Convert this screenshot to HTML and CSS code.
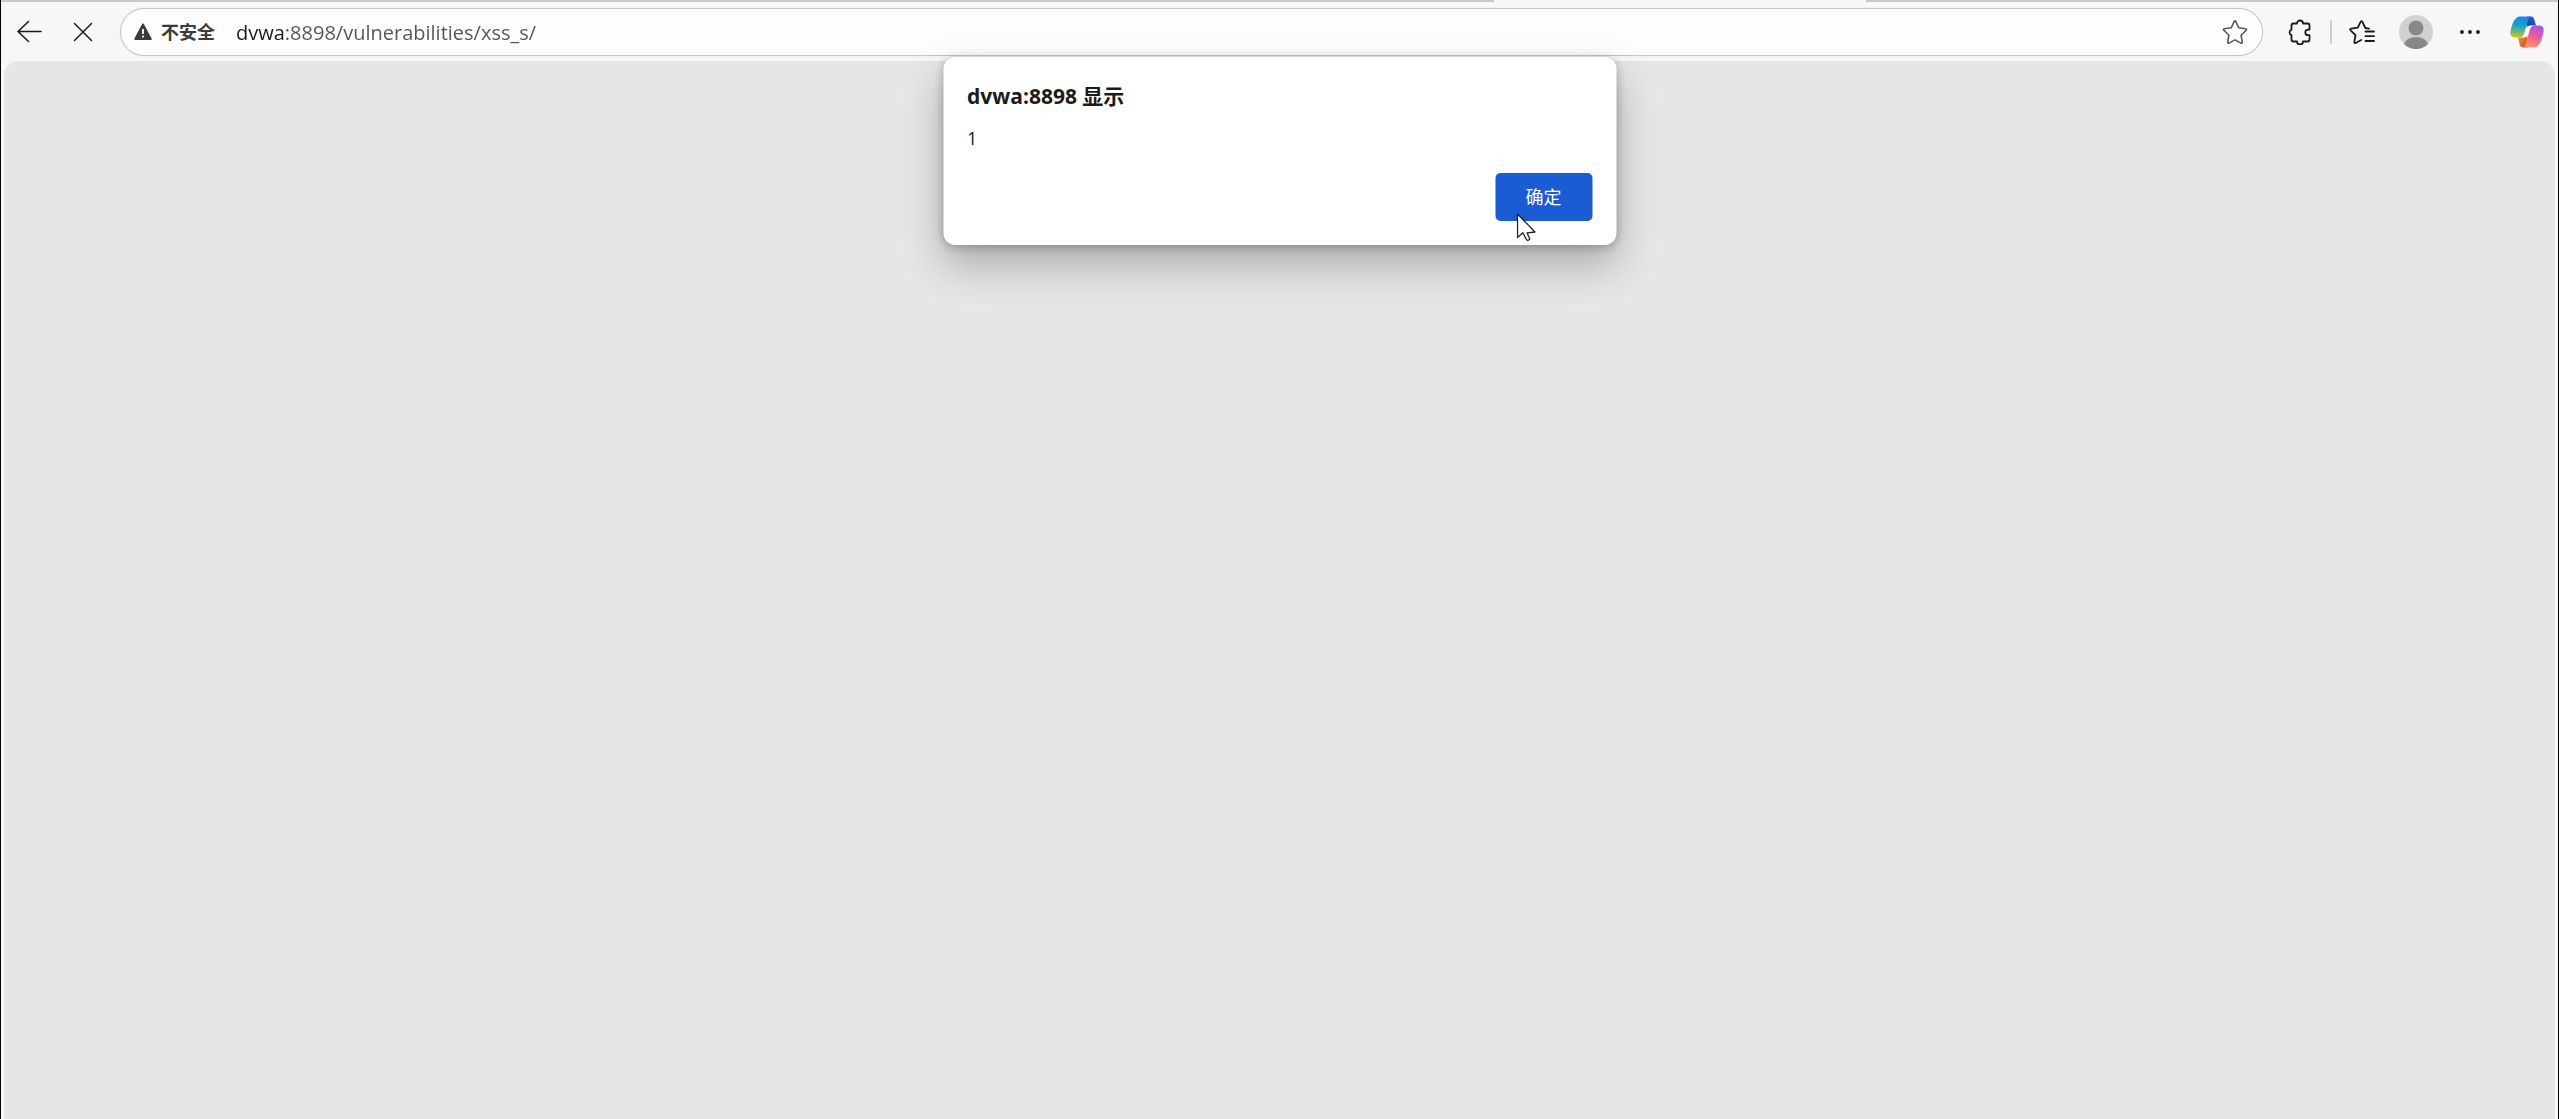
FILE: index.html
```html
<!DOCTYPE html>
<html lang="zh-CN">
<head>
	<meta charset="UTF-8">
	<title>dvwa:8898/vulnerabilities/xss_s/</title>
	<link rel="stylesheet" href="styles.css">
</head>
<body>
<!-- 标签栏底边 -->
	<div class="tabs">
		<div class="line tabs-left"></div>
		<div class="tab-gap"></div>
		<div class="line tabs-right"></div>
	</div>
<!-- 工具栏 -->
	<header class="toolbar">
		<button class="tool" aria-label="返回">
			<svg width="26" height="26" viewBox="0 0 26 26" fill="none" stroke="#1b1b1b" stroke-width="1.6" stroke-linecap="round" stroke-linejoin="round"><path d="M25 12.5H2M12.500 2.500 2 12.500l10.500 10"/></svg>
		</button>
		<button class="tool" aria-label="停止">
			<svg width="20" height="20" viewBox="0 0 20 20" fill="none" stroke="#1b1b1b" stroke-width="1.500" stroke-linecap="round"><path d="M1.500 1.500l17 17M18.500 1.500l-17 17"/></svg>
		</button>
		<div class="address">
			<button class="unsafe">
				<svg width="18" height="18" viewBox="0 0 18 18"><path d="M9 1.500 16.700 16H1.300z" fill="#3b3b3b" stroke="#3b3b3b" stroke-width="2" stroke-linejoin="round"/><path d="M9 6v5" stroke="#fff" stroke-width="1.800"/><circle cx="9" cy="13.500" r="1.100" fill="#fff"/></svg>
				<span>不安全</span>
			</button>
			<input class="url" type="text" aria-label="地址" value="dvwa:8898/vulnerabilities/xss_s/">
			<button class="tool" aria-label="收藏此页">
				<svg width="26" height="26" viewBox="0 0 26 26" fill="none" stroke="#555" stroke-width="1.600" stroke-linejoin="round"><path d="M12.200 2.500q.8-1.300 1.600 0l2.900 6.200 6.900 1q1.500.4.5 1.600l-5 4.900 1.200 6.900q0 1.500-1.400 1L13 20.900l-5.900 3.200q-1.400.5-1.400-1l1.200-6.900-5-4.900q-1-1.200.5-1.600l6.900-1z"/></svg>
			</button>
		</div>
		<button class="tool" aria-label="扩展">
			<svg width="26" height="26" viewBox="0 0 26 26" fill="none" stroke="#1b1b1b" stroke-width="1.800" stroke-linejoin="round"><path d="M6.500 4.500H10a3 3 0 0 1 6 0h4.500q2 0 2 2v4.200h-1.500a2.700 2.700 0 0 0 0 5.400h1.500v4.400q0 2-2 2H16a3 3 0 0 1-6 0H6.500q-2 0-2-2v-4.300a3 3 0 0 1 0-5.600V6.500q0-2 2-2z"/></svg>
		</button>
		<span class="divider"></span>
		<button class="tool" aria-label="收藏夹">
			<svg width="26" height="26" viewBox="0 0 26 26" fill="none" stroke="#1b1b1b" stroke-width="1.800" stroke-linecap="round" stroke-linejoin="round"><path d="M20 9.600l-3.700-.6-3-6.300q-.8-1.300-1.600 0L8.800 8.700l-6.700 1q-1.500.4-.5 1.600l4.900 4.900-1.200 6.900q0 1.400 1.400.9l5.500-3M16.500 12.500H25M16.500 17.200H25M16.500 22H25"/></svg>
		</button>
		<button class="tool" aria-label="个人资料">
			<svg width="34" height="34" viewBox="0 0 34 34"><circle cx="17" cy="17" r="17" fill="#d1d1d1"/><circle cx="17" cy="13" r="7.500" fill="#8a8886"/><path d="M5 29q3-7 12-7t12 7q-5 5-12 5T5 29z" fill="#8a8886"/></svg>
		</button>
		<button class="tool" aria-label="更多">
			<svg width="22" height="6" viewBox="0 0 22 6" fill="#1b1b1b"><circle cx="3" cy="3" r="1.900"/><circle cx="11" cy="3" r="1.900"/><circle cx="19" cy="3" r="1.900"/></svg>
		</button>
		<button class="tool copilot" aria-label="Copilot">
			<svg width="34" height="32" viewBox="0 0 34 32">
				<defs>
					<linearGradient id="cold" x1=".4" y1="0" x2=".3" y2="1"><stop offset="0" stop-color="#1888e6"/><stop offset=".4" stop-color="#1c9ed0"/><stop offset=".7" stop-color="#5fbb77"/><stop offset="1" stop-color="#d6c61c"/></linearGradient>
					<linearGradient id="warm" x1=".7" y1="0" x2=".4" y2="1"><stop offset="0" stop-color="#a655ea"/><stop offset=".5" stop-color="#ee5c96"/><stop offset="1" stop-color="#ff9468"/></linearGradient>
					<linearGradient id="navy" x1="0" y1="1" x2="1" y2="0"><stop offset="0" stop-color="#123c9c"/><stop offset="1" stop-color="#2a68dd"/></linearGradient>
					<linearGradient id="fire" x1="0" y1="0" x2="1" y2="1"><stop offset="0" stop-color="#f0a030"/><stop offset="1" stop-color="#d83f35"/></linearGradient>
				</defs>
				<path d="M17 .5h4q2.500 0 3.300 3l1.700 6h-5q-3 0-4.500 3z" fill="url(#navy)"/>
				<path d="M17 31.500h-4q-2.500 0-3.300-3L8 21.500h5q3 0 4.500-3z" fill="url(#fire)"/>
				<path d="M9.500.5H21q-2 .5-3 4l-3.500 12.500q-1.400 4.500-5 4.500H5Q.3 21.500.3 16.500q0-2 2.200-8.500T9.500.5z" fill="url(#cold)"/>
				<path d="M24.500 31.500H13q2-.5 3-4L19.500 14q1.400-4.500 5-4.500H29q4.700 0 4.700 5 0 2-2.200 9t-7 8z" fill="url(#warm)"/>
				<path d="M19.800 9.800h3q-2.300 1.200-3.300 4.200l-1.200 4.500q-.8 2.800-4 2.800h-2.800q2.200-1 3-4.300l1.200-4.200q.9-3 4.100-3z" fill="#fff"/>
			</svg>
		</button>
	</header>
<!-- 内容区域 -->
	<main class="page"></main>
<!-- 弹窗 -->
	<div class="dialog" role="alertdialog" aria-labelledby="title" aria-describedby="message">
		<h1 class="title" id="title">dvwa:8898 显示</h1>
		<p class="message" id="message">1</p>
		<div class="actions">
			<button class="ok">确定</button>
			<svg class="pointer" width="20" height="30" viewBox="0 0 20 30"><path d="M1 1v23.500l5.300-4.800 3.700 7q1.300 1.600 3.300-.6l-2.700-6.300L18.500 19z" fill="#fff" stroke="#222" stroke-width="1.300" stroke-linejoin="round"/></svg>
		</div>
	</div>
</body>
</html>
```
FILE: styles.css
```css
*{
	margin:0;
	padding:0;
	box-sizing: border-box;
}
body{
	min-height: 100vh;
	display: flex;
	flex-direction: column;
	background-color: #f7f7f7;
	border:solid #000;
	border-width: 0 1px;
	font-family: "Open Sans","Noto Sans CJK SC",sans-serif;
	overflow: hidden;
}
button,input{
	border:none;
	background: none;
	font-family: inherit;
}
svg{
	display: block;
}
/*标签栏底边*/
.tabs{
	display: flex;
	height: 3px;
}
.line{
	height: 2px;
	background-color: #c9c9c9;
}
.tabs-left{
	flex: 1493;
}
.tab-gap{
	flex: 372;
}
.tabs-right{
	flex: 692;
}
/*工具栏*/
.toolbar{
	display: flex;
	align-items: center;
	padding:5px 4px 5px 1px;
}
.tool{
	flex: none;
	width: 54px;
	height: 48px;
	display: flex;
	align-items: center;
	justify-content: center;
}
.copilot{
	margin-left: 3px;
}
.address{
	flex: 1;
	display: flex;
	align-items: center;
	height: 48px;
	margin:0 10px;
	padding-left: 13px;
	background-color: #fdfdfd;
	border:1px solid #c8c8c8;
	border-radius: 24px;
	box-shadow: 0 0 1px #ccc;
}
.unsafe{
	display: flex;
	align-items: center;
	gap: 9px;
	font-size: 18px;
	font-weight: bold;
	line-height: 24px;
	color:#3b3b3b;
}
.url{
	flex: 1;
	min-width: 0;
	height: 40px;
	margin-left: 21px;
	font-size: 20px;
	background: linear-gradient(to right,#1b1b1b 49px,#555 49px);
	-webkit-background-clip: text;
	background-clip: text;
	color:transparent;
	outline: none;
}
.divider{
	width: 2px;
	height: 24px;
	margin:0 3px;
	background-color: #cfcfcf;
}
/*内容区域*/
.page{
	flex: 1;
	margin:0 3px;
	background-color: #e6e6e6;
	border-radius: 14px 14px 0 0;
}
/*弹窗*/
.dialog{
	position: absolute;
	top:57px;
	left:50%;
	transform: translateX(-50%);
	width: 673px;
	padding:24px;
	background-color: #fff;
	border-radius: 12px;
	box-shadow: 0 20px 40px rgba(0,0,0,.26),0 2px 10px rgba(0,0,0,.24);
	color:#1b1b1b;
}
.title{
	font-size: 21px;
	line-height: 30px;
}
.message{
	margin-top: 15px;
	font-size: 18px;
	line-height: 24px;
}
.actions{
	position: relative;
	display: flex;
	justify-content: flex-end;
	margin-top: 23px;
}
.ok{
	width: 97px;
	height: 48px;
	padding-bottom: 2px;
	border-radius: 5px;
	background-color: #1a5cd3;
	color:#fff;
	font-size: 18px;
}
/*鼠标指针*/
.pointer{
	position: absolute;
	top:40px;
	right:56px;
}
```
